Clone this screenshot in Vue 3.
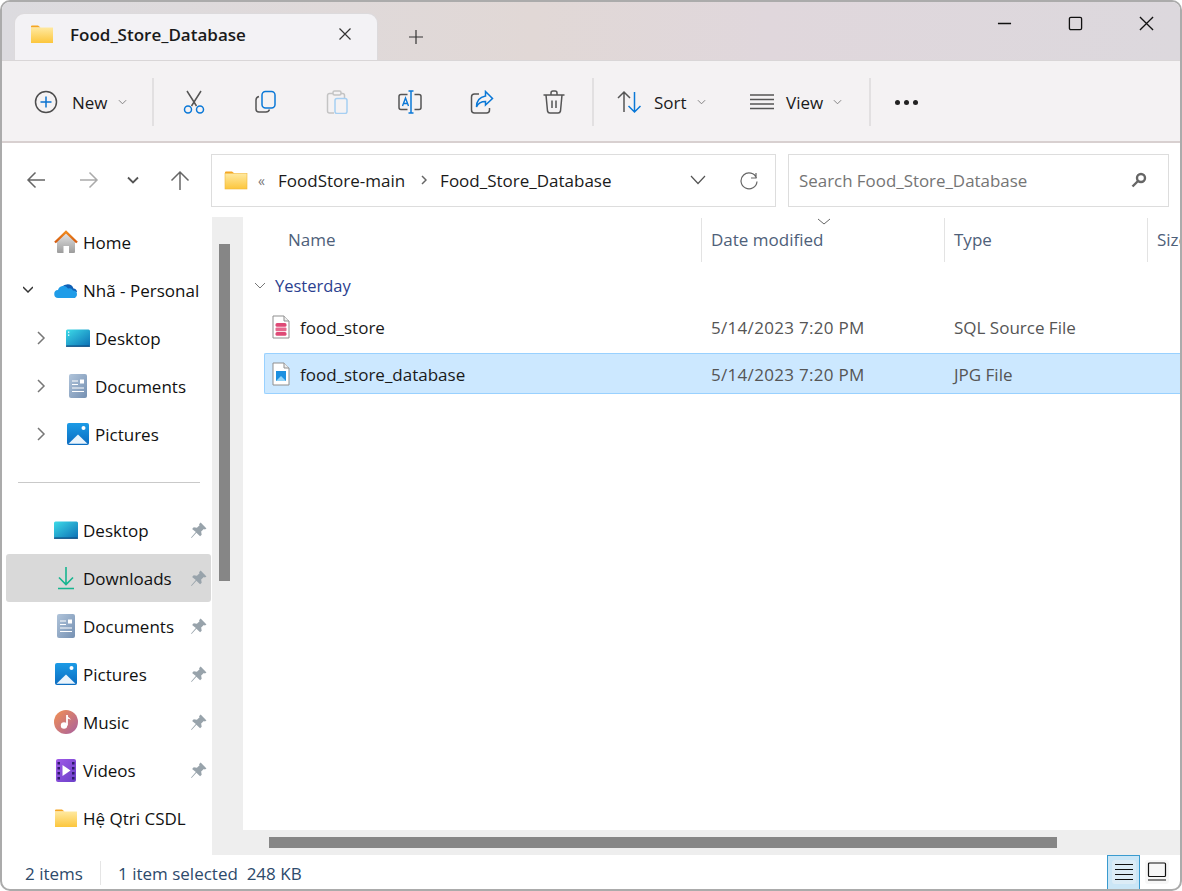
<template>
  <div class="window">
    <!-- shared gradients -->
    <svg class="defs" width="0" height="0">
      <defs>
        <linearGradient id="gFolder" x1="0" y1="0" x2="0" y2="1"><stop offset="0" stop-color="#ffe9a0" /><stop offset="1" stop-color="#fcc63c" /></linearGradient>
        <linearGradient id="gHome" x1="0" y1="0" x2="0" y2="1"><stop offset="0" stop-color="#e4e4e4" /><stop offset="1" stop-color="#9c9c9c" /></linearGradient>
        <linearGradient id="gRoof" x1="0" y1="0" x2="0" y2="1"><stop offset="0" stop-color="#f08a1e" /><stop offset="1" stop-color="#d4590f" /></linearGradient>
        <linearGradient id="gDesk" x1="0" y1="0" x2="1" y2="1"><stop offset="0" stop-color="#3ddbe8" /><stop offset="1" stop-color="#0c6fb5" /></linearGradient>
        <linearGradient id="gDoc" x1="0" y1="0" x2="1" y2="1"><stop offset="0" stop-color="#b0c4da" /><stop offset="1" stop-color="#7590b2" /></linearGradient>
        <linearGradient id="gPic" x1="0" y1="0" x2="0" y2="1"><stop offset="0" stop-color="#1c9be6" /><stop offset="1" stop-color="#0b6cc0" /></linearGradient>
        <linearGradient id="gMusic" x1="0" y1="0" x2="1" y2="1"><stop offset="0" stop-color="#f39152" /><stop offset="1" stop-color="#a8609f" /></linearGradient>
        <linearGradient id="gVideo" x1="0" y1="0" x2="1" y2="1"><stop offset="0" stop-color="#a05ae8" /><stop offset="1" stop-color="#6a3fc8" /></linearGradient>
      </defs>
    </svg>

    <!-- Title bar + tab -->
    <div class="titlebar">
      <div class="tab">
        <svg class="i-folder" viewBox="0 0 24 24">
          <path d="M1 4.500 a1 1 0 0 1 1-1 h6 l2.500 2 H1z" fill="#f5a623" />
          <rect x="1" y="5.500" width="22" height="15.500" fill="url(#gFolder)" />
        </svg>
        <span class="tab-title">Food_Store_Database</span>
        <svg class="tab-close" viewBox="0 0 14 14"><path d="M1.500 1.500l11 11M12.500 1.500l-11 11" /></svg>
      </div>
      <svg class="tab-add" viewBox="0 0 16 16"><path d="M8 1v14M1 8h14" /></svg>
      <div class="caption">
        <svg class="cap-btn" viewBox="0 0 16 16"><path d="M1 8h14" /></svg>
        <svg class="cap-btn" viewBox="0 0 16 16"><rect x="1.500" y="1.500" width="13" height="13" rx="1.500" /></svg>
        <svg class="cap-btn" viewBox="0 0 16 16"><path d="M1 1l14 14M15 1L1 15" /></svg>
      </div>
    </div>

    <!-- Command bar -->
    <div class="toolbar">
      <div class="tb-new">
        <svg class="tb-icon" viewBox="0 0 24 24">
          <circle cx="12" cy="12" r="10.500" stroke="#4d4d4d" />
          <path d="M12 6.500v11M6.500 12h11" stroke="#0a72d0" />
        </svg>
        <span class="tb-label">New</span>
        <svg class="tb-chev" viewBox="0 0 10 6"><path d="M1 1l4 4 4-4" /></svg>
      </div>
      <i class="tb-sep" />
      <div class="tb-btn">
        <svg class="tb-icon" viewBox="0 0 24 24">
          <path d="M5 1l9.500 15M19 1L9.500 16" stroke="#555" />
          <circle cx="6" cy="19.500" r="3.500" stroke="#0a78d7" />
          <circle cx="18" cy="19.500" r="3.500" stroke="#0a78d7" />
        </svg>
      </div>
      <div class="tb-btn">
        <svg class="tb-icon" viewBox="0 0 24 24">
          <path d="M5 6.500 C3 7 2 8 2 10 v9 c0 2 1.500 3 3 3 h7 c2 0 3-1 3.500-2.500" stroke="#555" />
          <rect x="8" y="1.500" width="13" height="16.500" rx="3.500" stroke="#0a78d7" />
        </svg>
      </div>
      <div class="tb-btn">
        <svg class="tb-icon" viewBox="0 0 24 24">
          <path d="M7 3.500H3.500a2 2 0 0 0-2 2V21a2 2 0 0 0 2 2H8M15 3.500h1.500a2 2 0 0 1 2 2V8" stroke="#c4c4c4" />
          <rect x="7" y="1" width="8" height="4" rx="1.500" stroke="#c4c4c4" />
          <rect x="9" y="8.500" width="12" height="15" rx="2" stroke="#a6cff2" />
        </svg>
      </div>
      <div class="tb-btn">
        <svg class="tb-icon" viewBox="0 0 24 24">
          <path d="M9.500 4.500H3a2 2 0 0 0-2 2v11a2 2 0 0 0 2 2h6.500M16.500 4.500H21a2 2 0 0 1 2 2v11a2 2 0 0 1-2 2h-4.500" stroke="#555" />
          <path d="M13 1v22M10.500 1h5M10.500 23h5" stroke="#0a78d7" />
          <path d="M4.500 16l3-8 3 8M5.500 13.500h4" stroke="#0a78d7" stroke-width="1.400" />
        </svg>
      </div>
      <div class="tb-btn">
        <svg class="tb-icon" viewBox="0 0 24 24">
          <path d="M9 4H4.500A3 3 0 0 0 1.500 7v13a3 3 0 0 0 3 3h12a3 3 0 0 0 3-3v-2" stroke="#555" />
          <path d="M15.500 1.500l7 7-7 6.500v-3.500C11 11.500 8 13.500 6.500 17c0-6 3.500-10 9-11z" stroke="#0a78d7" />
        </svg>
      </div>
      <div class="tb-btn">
        <svg class="tb-icon" viewBox="0 0 24 24">
          <path d="M1.500 5h21M9 5V3a2 2 0 0 1 2-2h2a2 2 0 0 1 2 2v2M4 5l1.500 16a2.500 2.500 0 0 0 2.500 2h8a2.500 2.500 0 0 0 2.500-2L20 5M10 10.500v7.500M14 10.500v7.500" stroke="#555" />
        </svg>
      </div>
      <i class="tb-sep" />
      <div class="tb-menu sort">
        <svg class="tb-icon" viewBox="0 0 24 24">
          <path d="M7 22V2M1 8l6-6 6 6" stroke="#555" />
          <path d="M17.500 2v20M11.500 16l6 6 6-6" stroke="#0a78d7" />
        </svg>
        <span class="tb-label">Sort</span>
        <svg class="tb-chev" viewBox="0 0 10 6"><path d="M1 1l4 4 4-4" /></svg>
      </div>
      <div class="tb-menu view">
        <svg class="tb-icon wide" viewBox="0 0 26 24">
          <path d="M1 5h24M1 9.500h24M1 14h24M1 18.500h24" stroke="#555" />
        </svg>
        <span class="tb-label">View</span>
        <svg class="tb-chev" viewBox="0 0 10 6"><path d="M1 1l4 4 4-4" /></svg>
      </div>
      <i class="tb-sep" />
      <div class="tb-more"><i /><i /><i /></div>
    </div>

    <!-- Address row -->
    <div class="addressrow">
      <div class="nav">
        <svg class="nav-ico" viewBox="0 0 20 20"><path d="M19 10H2M9.500 2.500L2 10l7.500 7.500" /></svg>
        <svg class="nav-ico off" viewBox="0 0 20 20"><path d="M1 10h17M10.500 2.500L18 10l-7.500 7.500" /></svg>
        <svg class="nav-ico small" viewBox="0 0 12 8"><path d="M1 1.500l5 5 5-5" /></svg>
        <svg class="nav-ico" viewBox="0 0 20 20"><path d="M10 20V2M1.500 10.500L10 2l8.500 8.500" /></svg>
      </div>
      <div class="crumbs">
        <svg class="i-folder" viewBox="0 0 24 24">
          <path d="M1 4.500 a1 1 0 0 1 1-1 h6 l2.500 2 H1z" fill="#f5a623" />
          <rect x="1" y="5.500" width="22" height="15.500" fill="url(#gFolder)" stroke="#f2b73a" stroke-width="0.600" />
        </svg>
        <span class="crumb-more">«</span>
        <span class="crumb">FoodStore-main</span>
        <svg class="crumb-sep" viewBox="0 0 6 10"><path d="M1 1l4 4-4 4" /></svg>
        <span class="crumb">Food_Store_Database</span>
        <svg class="crumb-drop" viewBox="0 0 16 10"><path d="M1 1l7 7.500L15 1" /></svg>
        <svg class="crumb-refresh" viewBox="0 0 20 20"><path d="M17 3v5h-5M17.500 8A8 8 0 1 0 18 11.500" /></svg>
      </div>
      <div class="search">
        <span>Search Food_Store_Database</span>
        <svg class="search-ico" viewBox="0 0 16 16">
          <circle cx="10" cy="6" r="4" />
          <path d="M7 9l-5.500 5.500" />
        </svg>
      </div>
    </div>

    <div class="main">
      <!-- Navigation pane -->
      <nav class="sidebar">
        <template v-for="(item, i) in NAV" :key="i">
          <div v-if="item.divider" class="side-divider"><i /></div>
          <div v-else class="side-row" :class="{ active: item.active, sub: item.sub }">
            <span class="side-chev">
              <svg v-if="item.chev" viewBox="0 0 10 14" :class="item.chev"><path :d="item.chev === 'open' ? 'M0 4l5 5 5-5' : 'M2 1l6 6-6 6'" /></svg>
            </span>
            <svg class="side-ico" viewBox="0 0 24 24">
              <template v-if="item.icon === 'home'">
                <path d="M3 11L12 3l9 8v11a1 1 0 0 1-1 1h-5v-7H9.500v7H4a1 1 0 0 1-1-1z" fill="url(#gHome)" />
                <path d="M1 12.500L12 2l11 10.500" fill="none" stroke="url(#gRoof)" stroke-width="2.400" />
              </template>
              <template v-else-if="item.icon === 'cloud'">
                <path d="M7 12a6.500 6.500 0 0 1 12.500-1.500A4 4 0 0 1 23 14L10 16z" fill="#0f5fb5" />
                <path d="M4.500 20A4 4 0 0 1 4 12a5.500 5.500 0 0 1 10-1.500 4 4 0 0 1 5 2 3.800 3.800 0 0 1 4 3.500 4 4 0 0 1-2 4z" fill="#1f9ce8" />
              </template>
              <template v-else-if="item.icon === 'desktop'">
                <rect x="0" y="3.500" width="24" height="17" rx="1.500" fill="url(#gDesk)" />
                <rect x="0" y="19.500" width="24" height="1.300" fill="#0a4a80" />
                <g v-if="item.sub" fill="#fff"><rect x="2" y="5.500" width="1.300" height="1.300" /><rect x="2" y="8.500" width="1.300" height="1.300" /></g>
              </template>
              <template v-else-if="item.icon === 'docs'">
                <rect x="3" y="0" width="18" height="24" rx="2" fill="url(#gDoc)" />
                <path d="M6 7h6M6 10.500h6M6 14h12M6 17.500h12" stroke="#fff" stroke-width="1" />
                <rect x="14" y="5.500" width="4" height="4" fill="#fff" />
              </template>
              <template v-else-if="item.icon === 'pics'">
                <rect x="1" y="1" width="22" height="22" rx="2" fill="url(#gPic)" />
                <path d="M2.500 21.800L12 12.500l9.500 9.300z" fill="#eaf4fc" />
                <circle cx="17.500" cy="6" r="2" fill="#fff" />
              </template>
              <template v-else-if="item.icon === 'down'">
                <path d="M12 1v17M5 11.500l7 7 7-7M4 22.500h16" fill="none" stroke="#16b58f" stroke-width="1.600" />
              </template>
              <template v-else-if="item.icon === 'music'">
                <circle cx="12" cy="12" r="12" fill="url(#gMusic)" />
                <path d="M13 5v10.500" stroke="#fff" stroke-width="1.800" />
                <path d="M13 5c.5 2.500 3 2.500 4 5-1.500-1-3-1.500-4-1.500z" fill="#fff" />
                <circle cx="10" cy="15.500" r="3.200" fill="#fff" />
              </template>
              <template v-else-if="item.icon === 'video'">
                <rect x="2" y="1" width="20" height="23" rx="2" fill="url(#gVideo)" />
                <g fill="#2e1a6b"><rect x="3.500" y="4" width="2.500" height="2.500" /><rect x="3.500" y="9" width="2.500" height="2.500" /><rect x="3.500" y="14" width="2.500" height="2.500" /><rect x="3.500" y="19" width="2.500" height="2.500" /><rect x="18" y="4" width="2.500" height="2.500" /><rect x="18" y="9" width="2.500" height="2.500" /><rect x="18" y="14" width="2.500" height="2.500" /><rect x="18" y="19" width="2.500" height="2.500" /></g>
                <path d="M8.500 7l8 5.500-8 5.500z" fill="#fff" />
              </template>
              <template v-else>
                <path d="M1 4.500a1 1 0 0 1 1-1h6l2.500 2H1z" fill="#f5a623" />
                <rect x="1" y="5.500" width="22" height="15.500" fill="url(#gFolder)" />
              </template>
            </svg>
            <span class="side-label">{{ item.label }}</span>
            <svg v-if="item.pin" class="side-pin" viewBox="0 0 16 16">
              <path d="M10 0.500l5.500 5.500-1.500 1-1-.5-2.500 2.500.5 3-1.500 1.500L6 10 1.500 15 1 14.500 5.500 9.500 2 6.500 3.500 5l3 .5L9 3l-.5-1z" />
            </svg>
          </div>
        </template>
      </nav>
      <div class="side-track"><i /></div>

      <!-- File list -->
      <section class="files">
        <div class="col-head">
          <span class="col name">Name</span>
          <span class="col date">Date modified
            <svg class="sort-caret" viewBox="0 0 14 7"><path d="M1 1l6 5 6-5" /></svg>
          </span>
          <span class="col type">Type</span>
          <span class="col size">Size</span>
        </div>
        <div class="group">
          <svg viewBox="0 0 12 7"><path d="M1 1l5 5 5-5" /></svg>
          <span>Yesterday</span>
        </div>
        <div class="file-list">
          <div v-for="f in FILES" :key="f.name" class="file" :class="{ selected: f.selected }">
            <span class="file-name">
              <svg class="file-ico" viewBox="0 0 18 24">
                <path d="M1 1h11l5 5v17H1z" fill="#fff" stroke="#8f8f8f" />
                <path d="M12 1v5h5" fill="#eee" stroke="#8f8f8f" />
                <template v-if="f.kind === 'sql'">
                  <rect x="3.500" y="8" width="11" height="3.800" rx="1.500" fill="#de4a76" />
                  <rect x="3.500" y="12.500" width="11" height="3.800" rx="1" fill="#e56a8f" />
                  <rect x="3.500" y="17" width="11" height="3.800" rx="1.500" fill="#de4a76" />
                </template>
                <template v-else>
                  <rect x="4" y="9" width="10" height="10" fill="#1b8fe0" />
                  <path d="M4 19l5-5 5 5z" fill="#8fd2f7" />
                </template>
              </svg>
              {{ f.name }}
            </span>
            <span class="file-date">{{ f.date }}</span>
            <span class="file-type">{{ f.type }}</span>
          </div>
        </div>
        <div class="hscroll"><i /></div>
      </section>
    </div>

    <!-- Status bar -->
    <footer class="status">
      <span class="st-count">2 items</span>
      <i class="st-sep" />
      <span class="st-sel">1 item selected&nbsp; 248 KB</span>
      <div class="view-btns">
        <div class="vbtn on">
          <span class="vbtn-in">
            <svg viewBox="0 0 20 20"><path d="M1 2.500h18M1 7.500h18M1 12.500h18M1 17.500h18" /></svg>
          </span>
        </div>
        <div class="vbtn">
          <span class="vbtn-in">
            <svg viewBox="0 0 20 20"><rect x="1.500" y="1" width="17" height="13.500" rx="1" /><path d="M1 18h18" /></svg>
          </span>
        </div>
      </div>
    </footer>
  </div>
</template>

<script setup>
const NAV = [
  { label: 'Home', icon: 'home' },
  { label: 'Nhã - Personal', icon: 'cloud', chev: 'open' },
  { label: 'Desktop', icon: 'desktop', chev: 'closed', sub: true },
  { label: 'Documents', icon: 'docs', chev: 'closed', sub: true },
  { label: 'Pictures', icon: 'pics', chev: 'closed', sub: true },
  { divider: true },
  { label: 'Desktop', icon: 'desktop', pin: true },
  { label: 'Downloads', icon: 'down', pin: true, active: true },
  { label: 'Documents', icon: 'docs', pin: true },
  { label: 'Pictures', icon: 'pics', pin: true },
  { label: 'Music', icon: 'music', pin: true },
  { label: 'Videos', icon: 'video', pin: true },
  { label: 'Hệ Qtri CSDL', icon: 'folder' },
]

const FILES = [
  { name: 'food_store', kind: 'sql', date: '5/14/2023 7:20 PM', type: 'SQL Source File' },
  { name: 'food_store_database', kind: 'jpg', date: '5/14/2023 7:20 PM', type: 'JPG File', selected: true },
]
</script>

<style>
html, body { margin: 0; background: #fff; overflow: hidden; }
</style>

<style scoped>
.window {
  width: 1182px;
  height: 891px;
  box-sizing: border-box;
  border: 2px solid #ababab;
  border-radius: 10px;
  overflow: hidden;
  display: flex;
  flex-direction: column;
  background: #fff;
  font-family: "Open Sans", "Noto Sans", sans-serif;
  font-size: 17px;
  color: #1a1a1a;
}
.defs { position: absolute; }
svg { display: block; flex-shrink: 0; fill: none; }

/* Title bar */
.titlebar {
  height: 58px;
  flex-shrink: 0;
  display: flex;
  align-items: flex-end;
  padding-left: 13px;
  background: linear-gradient(90deg, #dcdbdf 0%, #e1d8d6 45%, #e0d7dc 65%, #dcd8dd 100%);
}
.tab {
  width: 362px;
  height: 46px;
  flex-shrink: 0;
  box-sizing: border-box;
  padding: 0 0 6px 15px;
  display: flex;
  align-items: center;
  background: #f3f2f5;
  border-radius: 9px 9px 0 0;
  box-shadow: 0 0 0 1px #dcdadc;
}
.i-folder { width: 24px; height: 24px; }
.tab-title { margin-left: 16px; font-weight: 600; font-size: 17px; width: 255px; white-space: nowrap; }
.tab-close { width: 14px; height: 14px; margin-left: 13px; stroke: #333; stroke-width: 1.200; }
.tab-add { width: 16px; height: 16px; margin: 0 0 15px 31px; stroke: #333; stroke-width: 1.200; align-self: flex-end; }
.caption { margin-left: auto; align-self: flex-start; display: flex; padding: 14px 26px 0 0; gap: 56px; }
.cap-btn { width: 15px; height: 15px; stroke: #111; stroke-width: 1.400; }

/* Command bar */
.toolbar {
  height: 83px;
  flex-shrink: 0;
  box-sizing: border-box;
  display: flex;
  align-items: center;
  padding: 2px 0 0 32px;
  background: #f4f2f3;
  border-top: 1px solid #d9d6d7;
  border-bottom: 2px solid #d8d0d0;
}
.tb-icon { width: 24px; height: 24px; stroke-width: 1.500; }
.tb-icon.wide { width: 26px; }
.tb-new { width: 118px; display: flex; align-items: center; }
.tb-label { margin-left: 14px; font-size: 17px; }
.tb-chev { width: 9px; height: 6px; margin-left: 10px; stroke: #777; stroke-width: 1; }
.tb-sep { width: 2px; height: 48px; background: #e2e0e1; flex-shrink: 0; }
.tb-btn { width: 72px; display: flex; justify-content: center; }
.tb-sep + .tb-btn { margin-left: 4px; }
.tb-sep + .tb-menu { margin-left: 23px; }
.tb-sep + .tb-more { margin-left: 24px; }
.tb-menu { display: flex; align-items: center; }
.tb-menu.sort { width: 132px; }
.tb-btn + .tb-sep { margin-left: 2px; }
.tb-menu.view { width: 120px; }
.tb-menu.sort .tb-label { margin-left: 13px; }
.tb-menu.view .tb-label { margin-left: 11px; }
.tb-more { display: flex; gap: 4px; }
.tb-more i { width: 5px; height: 5px; border-radius: 50%; background: #222; }

/* Address row */
.addressrow {
  height: 74px;
  flex-shrink: 0;
  box-sizing: border-box;
  display: flex;
  align-items: center;
}
.nav { width: 209px; display: flex; align-items: center; flex-shrink: 0; }
.nav-ico { width: 20px; height: 20px; stroke: #666; stroke-width: 1.500; margin-left: 24px; }
.nav-ico:first-child { margin-left: 24px; }
.nav-ico.off { stroke: #aaa; margin-left: 33px; }
.nav-ico.small { width: 12px; height: 8px; margin-left: 28px; stroke-width: 1.800; stroke: #555; }
.nav-ico:last-child { margin-left: 31px; }
.crumbs, .search {
  height: 53px;
  box-sizing: border-box;
  border: 1.500px solid #dddddd;
  display: flex;
  align-items: center;
}
.crumbs { width: 565px; padding-left: 12px; flex-shrink: 0; }
.crumb-more { margin-left: 10px; font-size: 14px; color: #777; width: 20px; }
.crumb { font-size: 17px; white-space: nowrap; }
.crumb-sep { width: 6px; height: 10px; margin: 0 13px 0 16px; stroke: #666; stroke-width: 1.500; }
.crumb-drop { width: 16px; height: 10px; margin-left: auto; stroke: #555; stroke-width: 1.200; }
.crumb-refresh { width: 20px; height: 20px; margin: 0 16px 0 33px; stroke: #666; stroke-width: 1.200; }
.search { width: 381px; margin-left: 12px; padding: 0 21px 0 10px; justify-content: space-between; color: #757575; font-size: 16.900px; }
.search-ico { width: 16px; height: 16px; stroke: #666; stroke-width: 2.400; }

/* Panes */
.main { flex: 1; display: flex; min-height: 0; }
.sidebar { width: 210px; flex-shrink: 0; padding: 1px 1px 0 4px; box-sizing: border-box; overflow: hidden; }
.side-row {
  height: 48px;
  display: flex;
  align-items: center;
  padding-left: 12px;
  border-radius: 3px;
  color: #111;
}
.side-row.sub { padding-left: 24px; }
.side-row.active { background: #d9d9d9; }
.side-chev { width: 36px; flex-shrink: 0; }
.side-chev svg { stroke: #777; stroke-width: 1.500; width: 10px; height: 14px; margin-left: 6px; }
.side-chev svg.open { stroke: #333; margin-left: 5px; }
.side-ico { width: 24px; height: 24px; }
.side-label { margin-left: 5px; white-space: nowrap; font-size: 17px; }
.side-pin { width: 17px; height: 17px; margin-left: auto; margin-right: 4px; fill: #98a3ab; }
.side-divider { height: 48px; display: flex; align-items: center; padding: 0 11px 0 12px; }
.side-divider i { flex: 1; height: 1px; background: #c9c9c9; }
.side-track { width: 31px; flex-shrink: 0; background: #eeeeee; padding: 27px 0 0 7px; box-sizing: border-box; }
.side-track i { display: block; width: 11px; height: 337px; background: #868686; }

.files { flex: 1; min-width: 0; display: flex; flex-direction: column; overflow: hidden; }
.col-head { height: 44px; margin-top: 1px; display: flex; flex-shrink: 0; }
.col { flex-shrink: 0; box-sizing: border-box; padding: 10px 0 0 9px; font-size: 17px; color: #4e6079; position: relative; border-left: 1px solid #e3e3e3; white-space: nowrap; }
.col.name { width: 458px; border-left: 0; padding-left: 45px; }
.col.date { width: 243px; }
.col.type { width: 203px; }
.col.size { width: 100px; }
.sort-caret { position: absolute; left: 115px; top: 0; width: 14px; height: 7px; stroke: #666; stroke-width: 1; }
.group { height: 44px; flex-shrink: 0; box-sizing: border-box; display: flex; align-items: center; padding: 4px 0 1px 11px; color: #2b3f8f; font-size: 16.500px; }
.group svg { width: 12px; height: 7px; stroke: #777; stroke-width: 1; margin-right: 9px; }
.file-list { flex: 1; display: flex; flex-direction: column; gap: 6px; padding-left: 21px; }
.file {
  height: 41px;
  flex-shrink: 0;
  box-sizing: border-box;
  display: grid;
  grid-template-columns: 437px 243px 1fr;
  align-items: center;
  padding-top: 1px;
  border: 1px solid transparent;
  border-right: 0;
  border-radius: 2px 0 0 2px;
}
.file.selected { background: #cce8ff; border-color: #99d1ff; }
.file-name { display: flex; align-items: center; padding-left: 7px; }
.file-ico { width: 18px; height: 24px; margin-right: 10px; }
.file-date, .file-type { padding-left: 9px; color: #555; font-size: 17px; white-space: nowrap; }
.file-date { letter-spacing: 0.300px; }
.hscroll { height: 25px; flex-shrink: 0; background: #eeeeee; padding: 7px 0 0 26px; box-sizing: border-box; }
.hscroll i { display: block; width: 788px; height: 11px; background: #868686; }

/* Status bar */
.status { height: 34px; flex-shrink: 0; box-sizing: border-box; padding-top: 2px; display: flex; align-items: center; color: #2d4a6b; font-size: 17px; }
.st-count { margin-left: 23px; width: 75px; white-space: nowrap; }
.st-sep { width: 1px; height: 24px; background: #e5e5e5; }
.st-sel { margin-left: 17px; white-space: nowrap; }
.view-btns { margin-left: auto; display: flex; height: 35px; margin-top: -2px; gap: 5px; padding-right: 11px; }
.vbtn { width: 33px; height: 35px; box-sizing: border-box; display: flex; align-items: center; justify-content: center; }
.vbtn.on { background: #cbe6f6; border: 1.500px solid #3a9bcf; }
.vbtn-in { width: 24px; height: 24px; border-radius: 3px; display: flex; align-items: center; justify-content: center; background: #f7f7f7; }
.vbtn.on .vbtn-in { background: #dcecf6; }
.vbtn-in svg { width: 20px; height: 20px; stroke: #111; stroke-width: 1.200; }
.vbtn:last-child { width: 24px; }
</style>
